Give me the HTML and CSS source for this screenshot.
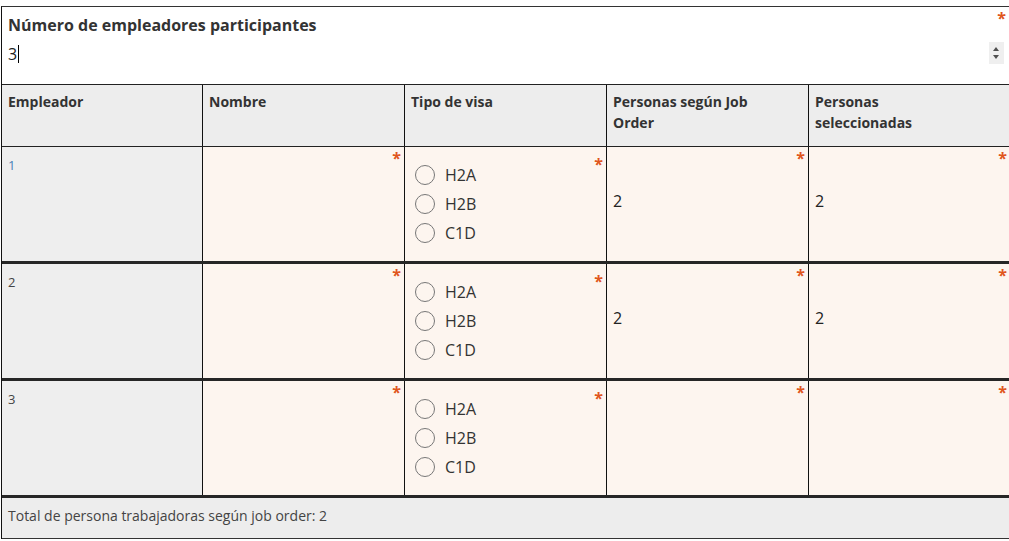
FILE: index.html
```html
<!DOCTYPE html>
<html lang="es">
<head>
    <meta charset="UTF-8">
    <title>Empleadores participantes</title>
    <link rel="stylesheet" href="styles.css">
</head>
<body>
<div class="form">
    <div class="field">
        <label class="field-label" for="numEmp">Número de empleadores participantes</label>
        <div class="number-input">
            <span class="value">3</span><span class="caret"></span>
            <span class="spin"><span class="up"></span><span class="down"></span></span>
        </div>
        <span class="req req-field">*</span>
    </div>

    <div class="grid head">
        <div class="cell">Empleador</div>
        <div class="cell">Nombre</div>
        <div class="cell">Tipo de visa</div>
        <div class="cell">Personas según Job Order</div>
        <div class="cell">Personas seleccionadas</div>
    </div>

    <!-- empleador 1 -->
    <div class="grid row">
        <div class="cell idx first">1</div>
        <div class="cell inp"><span class="req">*</span></div>
        <div class="cell inp visa">
            <span class="req req-visa">*</span>
            <label class="opt"><input type="radio" name="visa1">H2A</label>
            <label class="opt"><input type="radio" name="visa1">H2B</label>
            <label class="opt"><input type="radio" name="visa1">C1D</label>
        </div>
        <div class="cell inp num">2<span class="req">*</span></div>
        <div class="cell inp num">2<span class="req">*</span></div>
    </div>

    <!-- empleador 2 -->
    <div class="grid row">
        <div class="cell idx">2</div>
        <div class="cell inp"><span class="req">*</span></div>
        <div class="cell inp visa">
            <span class="req req-visa">*</span>
            <label class="opt"><input type="radio" name="visa2">H2A</label>
            <label class="opt"><input type="radio" name="visa2">H2B</label>
            <label class="opt"><input type="radio" name="visa2">C1D</label>
        </div>
        <div class="cell inp num">2<span class="req">*</span></div>
        <div class="cell inp num">2<span class="req">*</span></div>
    </div>

    <!-- empleador 3 -->
    <div class="grid row">
        <div class="cell idx">3</div>
        <div class="cell inp"><span class="req">*</span></div>
        <div class="cell inp visa">
            <span class="req req-visa">*</span>
            <label class="opt"><input type="radio" name="visa3">H2A</label>
            <label class="opt"><input type="radio" name="visa3">H2B</label>
            <label class="opt"><input type="radio" name="visa3">C1D</label>
        </div>
        <div class="cell inp num"><span class="req">*</span></div>
        <div class="cell inp num"><span class="req">*</span></div>
    </div>

    <div class="total">Total de persona trabajadoras según job order: 2</div>
</div>
</body>
</html>
```

FILE: styles.css
```css
html, body {
    margin: 0;
    overflow: hidden;
    background: #fff;
}
body {
    font-family: "Open Sans", "Liberation Sans", sans-serif;
    color: #333;
}

.form {
    margin: 6px 0 0 1px;
    width: 1011px;
    border-top: 1px solid #333;
    border-left: 1px solid #111;
}

/* campo numerico */
.field {
    position: relative;
    height: 78px;
    padding: 0 6px;
    box-sizing: border-box;
    border-bottom: 1px solid #222;
}
.field-label {
    display: block;
    padding-top: 7px;
    font-size: 16px;
    font-weight: bold;
    line-height: 22px;
}
.number-input {
    position: relative;
    height: 22px;
    margin-top: 7px;
    display: flex;
    align-items: center;
    font-size: 16px;
    color: #222;
}
.caret {
    display: inline-block;
    width: 1px;
    height: 18px;
    background: #000;
    margin-left: 1px;
}
.spin {
    position: absolute;
    left: 981px;
    top: -1px;
    width: 15px;
    height: 22px;
    background: #efefef;
}
.spin .up, .spin .down {
    position: absolute;
    left: 4px;
    width: 0;
    height: 0;
    border-left: 3.5px solid transparent;
    border-right: 3.5px solid transparent;
}
.spin .up {
    top: 5px;
    border-bottom: 4px solid #505050;
}
.spin .down {
    top: 13px;
    border-top: 4px solid #505050;
}

.req {
    position: absolute;
    top: 3px;
    right: 3px;
    color: #e0561c;
    font-size: 16px;
    line-height: 16px;
    font-weight: bold;
}
.req-field {
    top: 3px;
    right: 7px;
}
.req-visa {
    top: 9px;
    right: 3px;
}

/* tabla */
.grid {
    display: grid;
    grid-template-columns: 201px repeat(4, 202px);
}
.cell {
    position: relative;
    box-sizing: border-box;
    border-right: 1px solid #111;
    padding: 0 6px;
}
.head {
    border-bottom: 1px solid #222;
    background: #ededed;
}
.head .cell {
    height: 61px;
    padding: 6px 40px 0 6px;
    font-size: 14px;
    font-weight: bold;
    line-height: 21px;
    color: #333;
}
.row {
    border-bottom: 3px solid #262626;
}
.row .cell {
    height: 114px;
}
.idx {
    background: #eeeeee;
    padding-top: 8px;
    font-size: 13px;
    line-height: 20px;
    color: #444;
}
.idx.first {
    color: #4a82b8;
}
.inp {
    background: #fdf5ef;
}
.num {
    display: flex;
    align-items: center;
    padding-bottom: 6px;
    font-size: 16px;
    color: #222;
}
.visa {
    padding: 13px 10px 0;
}
.opt {
    display: flex;
    align-items: center;
    gap: 10px;
    height: 29px;
    font-size: 16px;
    color: #333;
}
.opt input {
    appearance: none;
    -webkit-appearance: none;
    margin: 0;
    width: 20px;
    height: 20px;
    border: 1.5px solid #777;
    border-radius: 50%;
    background: transparent;
}

.total {
    height: 41px;
    box-sizing: border-box;
    padding: 8px 6px 0;
    background: #ededed;
    border-bottom: 1px solid #333;
    font-size: 14px;
    line-height: 20px;
    color: #444;
}
```
